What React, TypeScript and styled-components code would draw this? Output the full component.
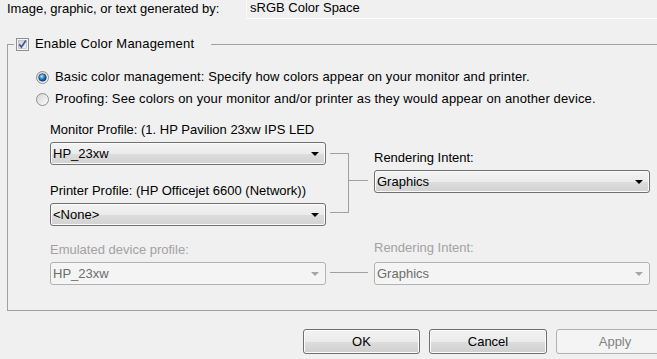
import styled, { createGlobalStyle } from "styled-components";

const GlobalStyle = createGlobalStyle`
  html, body {
    margin: 0;
    padding: 0;
    background: #f0f0f0;
    overflow: hidden;
  }
  body {
    font-family: "Liberation Sans", Arial, sans-serif;
    font-size: 13px;
    line-height: 16px;
    color: #000;
  }
`;

const Dialog = styled.div`
  width: 684px;
  height: 359px;
  box-sizing: border-box;
  padding: 0 7px;
`;

const TopRow = styled.div`
  display: flex;
  height: 19px;
`;

const TopLabel = styled.div`
  width: 239px;
  padding-top: 1px;
`;

const ReadOnlyField = styled.div`
  flex: 1;
  box-sizing: border-box;
  height: 19px;
  padding: 0 0 0 3px;
  border-left: 1px solid #f8f8f8;
  border-bottom: 1px solid #fff;
`;

const Group = styled.fieldset`
  margin: 17px 0 0;
  padding: 0;
  min-width: 0;
  border: 1px solid #a0a0a0;
`;

const GroupLegend = styled.legend`
  display: flex;
  align-items: center;
  gap: 6px;
  height: 16px;
  margin-left: 6px;
  padding: 0 17px 0 2px;
  letter-spacing: 0.2px;
`;

const GroupBody = styled.div`
  padding: 17px 0 25px 28px;
`;

const RadioList = styled.div`
  display: flex;
  flex-direction: column;
  gap: 6px;
`;

const RadioRow = styled.div`
  display: flex;
  align-items: center;
  gap: 6px;
  height: 16px;
  letter-spacing: 0.12px;
`;

const Profiles = styled.div`
  margin: 15px 0 0 14px;
`;

const Block = styled.div<{ $top?: number }>`
  display: flex;
  margin-top: ${(p) => p.$top ?? 0}px;
`;

const Column = styled.div<{ $top?: number }>`
  display: flex;
  flex-direction: column;
  width: 276px;
  margin-top: ${(p) => p.$top ?? 0}px;
`;

const FieldLabel = styled.div<{ $disabled?: boolean; $top?: number; $gap?: number }>`
  height: 16px;
  margin-top: ${(p) => p.$top ?? 0}px;
  margin-bottom: ${(p) => p.$gap ?? 4}px;
  color: ${(p) => (p.$disabled ? "#a2a2a2" : "#000")};
  white-space: nowrap;
`;

const Combo = styled.div<{ $disabled?: boolean }>`
  display: flex;
  align-items: center;
  justify-content: space-between;
  box-sizing: border-box;
  height: 23px;
  padding: 0 6px 0 2px;
  border: 1px solid ${(p) => (p.$disabled ? "#adb2b5" : "#707070")};
  border-radius: 3px;
  color: ${(p) => (p.$disabled ? "#6d6d6d" : "#000")};
  background: ${(p) =>
    p.$disabled
      ? "#f4f4f4"
      : "linear-gradient(#f3f3f3 0%, #ebebeb 50%, #dddddd 51%, #d2d2d2 100%)"};
  box-shadow: inset 0 0 0 1px ${(p) => (p.$disabled ? "#f7f7f7" : "#fbfbfb")};
`;

const Connector = styled.div`
  display: flex;
  align-items: flex-start;
  width: 48px;
  padding-left: 4px;
  box-sizing: border-box;
`;

const Bracket = styled.div`
  box-sizing: border-box;
  width: 19px;
  height: 60px;
  margin-top: 31px;
  border: 1px solid #a0a0a0;
  border-left: none;
`;

const Stub = styled.div<{ $top: number; $width: number }>`
  width: ${(p) => p.$width}px;
  height: 1px;
  margin-top: ${(p) => p.$top}px;
  background: #a0a0a0;
`;

const ButtonRow = styled.div`
  display: flex;
  justify-content: flex-end;
  gap: 9px;
  margin-top: 18px;
  padding-right: 3px;
`;

const PushButton = styled.button<{ $width: number }>`
  width: ${(p) => p.$width}px;
  height: 25px;
  padding: 0;
  font: inherit;
  color: #000;
  border: 1px solid #707070;
  border-radius: 3px;
  background: linear-gradient(#f2f2f2 0%, #ebebeb 50%, #dddddd 51%, #cfcfcf 100%);
  box-shadow: inset 0 0 0 1px #fcfcfc;

  &:disabled {
    color: #838383;
    border-color: #adb2b5;
    background: #f4f4f4;
    box-shadow: none;
  }
`;

const CheckBox = () => (
  <svg width="13" height="13" viewBox="0 0 13 13">
    <defs>
      <linearGradient id="cbFill" x1="0" y1="0" x2="1" y2="1">
        <stop offset="0" stopColor="#c9cdd4" />
        <stop offset="1" stopColor="#f7f7f8" />
      </linearGradient>
    </defs>
    <rect x="0.5" y="0.5" width="12" height="12" fill="#f4f4f4" stroke="#8e8f8f" />
    <rect x="2.5" y="2.5" width="8" height="8" fill="url(#cbFill)" stroke="#aeb3ba" strokeWidth="0.6" />
    <path d="M3.2 6.4 L5.4 9 L9.9 2.6" fill="none" stroke="#41579a" strokeWidth="1.7" />
  </svg>
);

const Radio = ({ checked }: { checked?: boolean }) => (
  <svg width="13" height="13" viewBox="0 0 13 13">
    <defs>
      <linearGradient id="rdRing" x1="0" y1="0" x2="1" y2="1">
        <stop offset="0" stopColor="#d4d4d4" />
        <stop offset="1" stopColor="#fdfdfd" />
      </linearGradient>
      <radialGradient id="rdDot" cx="0.4" cy="0.35" r="0.7">
        <stop offset="0" stopColor="#b8eeff" />
        <stop offset="0.45" stopColor="#2d8ad4" />
        <stop offset="1" stopColor="#0a2c58" />
      </radialGradient>
    </defs>
    <circle cx="6.5" cy="6.5" r="6" fill="url(#rdRing)" stroke="#8e8f8f" />
    {checked ? (
      <circle cx="6.5" cy="6.5" r="3.8" fill="url(#rdDot)" stroke="#1a3561" strokeWidth="0.6" />
    ) : null}
  </svg>
);

const Arrow = ({ disabled }: { disabled?: boolean }) => (
  <svg width="8" height="4" viewBox="0 0 8 4">
    <path d="M0 0 H8 L4 4 Z" fill={disabled ? "#a5a5a5" : "#000"} />
  </svg>
);

const Select = ({ value, disabled }: { value: string; disabled?: boolean }) => (
  <Combo $disabled={disabled}>
    <span>{value}</span>
    <Arrow disabled={disabled} />
  </Combo>
);

export default function App() {
  return (
    <Dialog>
      <GlobalStyle />
      <TopRow>
        <TopLabel>Image, graphic, or text generated by:</TopLabel>
        <ReadOnlyField>sRGB Color Space</ReadOnlyField>
      </TopRow>

      <Group>
        <GroupLegend>
          <CheckBox />
          Enable Color Management
        </GroupLegend>
        <GroupBody>
          <RadioList>
            <RadioRow>
              <Radio checked />
              Basic color management: Specify how colors appear on your monitor and printer.
            </RadioRow>
            <RadioRow>
              <Radio />
              Proofing: See colors on your monitor and/or printer as they would appear on another device.
            </RadioRow>
          </RadioList>

          <Profiles>
            <Block>
              <Column>
                <FieldLabel>Monitor Profile: (1. HP Pavilion 23xw IPS LED</FieldLabel>
                <Select value="HP_23xw" />
                <FieldLabel $top={18}>Printer Profile: (HP Officejet 6600 (Network))</FieldLabel>
                <Select value="<None>" />
              </Column>
              <Connector>
                <Bracket />
                <Stub $top={58} $width={19} />
              </Connector>
              <Column $top={28}>
                <FieldLabel>Rendering Intent:</FieldLabel>
                <Select value="Graphics" />
              </Column>
            </Block>

            <Block $top={16}>
              <Column>
                <FieldLabel $disabled>Emulated device profile:</FieldLabel>
                <Select value="HP_23xw" disabled />
              </Column>
              <Connector>
                <Stub $top={30} $width={38} />
              </Connector>
              <Column $top={-2}>
                <FieldLabel $disabled $gap={6}>Rendering Intent:</FieldLabel>
                <Select value="Graphics" disabled />
              </Column>
            </Block>
          </Profiles>
        </GroupBody>
      </Group>

      <ButtonRow>
        <PushButton $width={117}>OK</PushButton>
        <PushButton $width={118}>Cancel</PushButton>
        <PushButton $width={118} disabled>
          Apply
        </PushButton>
      </ButtonRow>
    </Dialog>
  );
}
